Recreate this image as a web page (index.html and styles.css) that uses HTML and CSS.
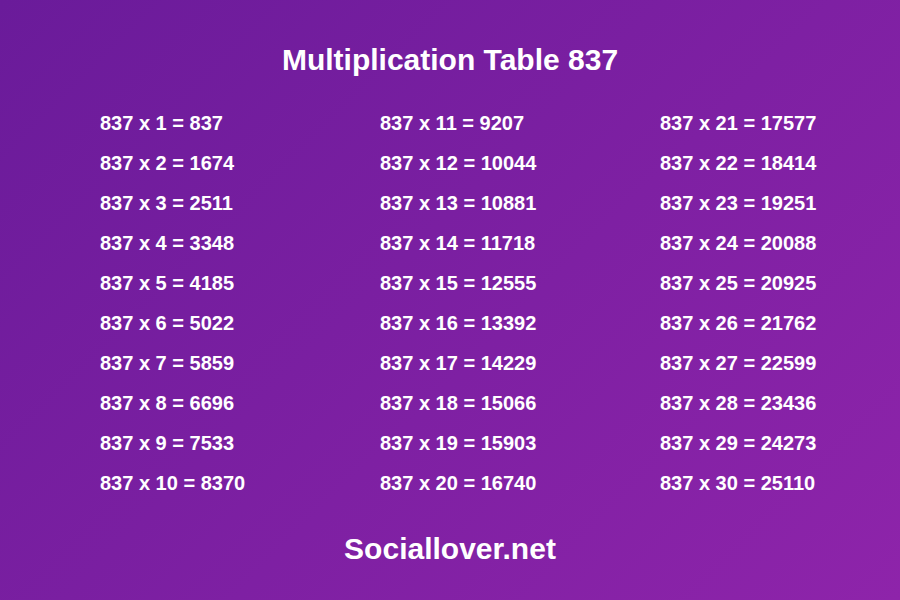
FILE: index.html
```html
<!DOCTYPE html>
<html>
<head>
<meta charset="utf-8">
<link rel="stylesheet" href="styles.css">
</head>
<body>
<div class="page">
  <h1 class="title">Multiplication Table 837</h1>
  <div class="grid">
    <div class="col">
      <div class="row">837 x 1 = 837</div>
      <div class="row">837 x 2 = 1674</div>
      <div class="row">837 x 3 = 2511</div>
      <div class="row">837 x 4 = 3348</div>
      <div class="row">837 x 5 = 4185</div>
      <div class="row">837 x 6 = 5022</div>
      <div class="row">837 x 7 = 5859</div>
      <div class="row">837 x 8 = 6696</div>
      <div class="row">837 x 9 = 7533</div>
      <div class="row">837 x 10 = 8370</div>
    </div>
    <div class="col">
      <div class="row">837 x 11 = 9207</div>
      <div class="row">837 x 12 = 10044</div>
      <div class="row">837 x 13 = 10881</div>
      <div class="row">837 x 14 = 11718</div>
      <div class="row">837 x 15 = 12555</div>
      <div class="row">837 x 16 = 13392</div>
      <div class="row">837 x 17 = 14229</div>
      <div class="row">837 x 18 = 15066</div>
      <div class="row">837 x 19 = 15903</div>
      <div class="row">837 x 20 = 16740</div>
    </div>
    <div class="col">
      <div class="row">837 x 21 = 17577</div>
      <div class="row">837 x 22 = 18414</div>
      <div class="row">837 x 23 = 19251</div>
      <div class="row">837 x 24 = 20088</div>
      <div class="row">837 x 25 = 20925</div>
      <div class="row">837 x 26 = 21762</div>
      <div class="row">837 x 27 = 22599</div>
      <div class="row">837 x 28 = 23436</div>
      <div class="row">837 x 29 = 24273</div>
      <div class="row">837 x 30 = 25110</div>
    </div>
  </div>
  <div class="footer">Sociallover.net</div>
</div>
</body>
</html>
```
FILE: styles.css
```css
html, body {
  margin: 0;
  padding: 0;
}
.page {
  width: 900px;
  height: 600px;
  box-sizing: border-box;
  background: linear-gradient(135deg, #6a1b9a 0%, #8e24aa 100%);
  color: #ffffff;
  font-family: "Liberation Sans", Arial, sans-serif;
  font-weight: bold;
  display: flex;
  flex-direction: column;
  padding-top: 40px;
}
.title {
  margin: 0;
  font-size: 30px;
  line-height: 40px;
  text-align: center;
  font-weight: bold;
}
.grid {
  display: flex;
  padding-left: 100px;
  margin-top: 23px;
}
.col {
  width: 280px;
  flex-shrink: 0;
  display: flex;
  flex-direction: column;
}
.row {
  font-size: 20px;
  line-height: 40px;
  height: 40px;
}
.footer {
  margin-top: 26px;
  font-size: 30px;
  line-height: 40px;
  text-align: center;
}
```
